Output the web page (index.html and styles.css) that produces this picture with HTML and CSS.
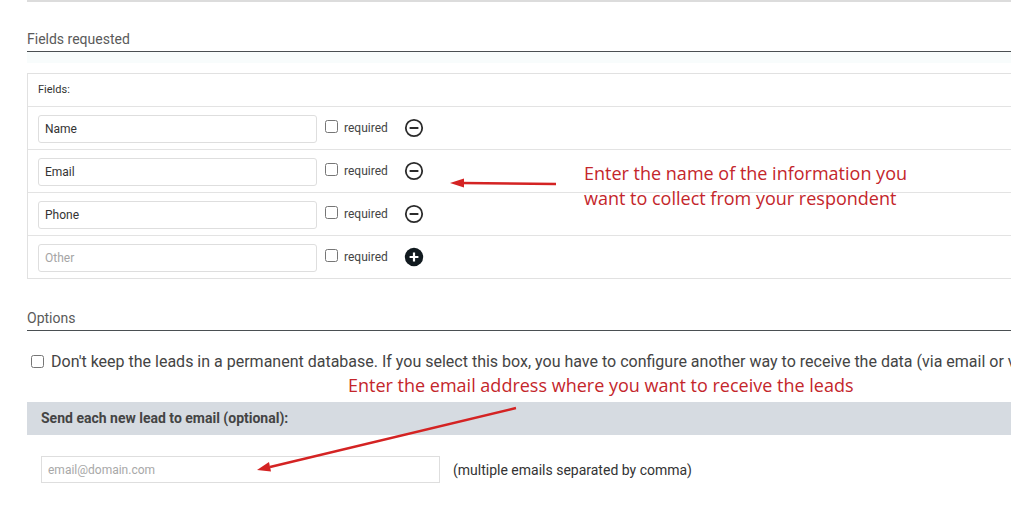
FILE: index.html
```html
<!DOCTYPE html>
<html lang="en">

<head>
  <meta charset="UTF-8" />
  <meta name="viewport" content="width=device-width, initial-scale=1.0" />
  <title>Form settings</title>
  <link rel="stylesheet" href="styles.css">
</head>

<body>
  <div class="page">
    <div class="top-rule"></div>

    <h2 class="section-title first">Fields requested</h2>
    <div class="title-shade"></div>

    <div class="fields-box">
      <div class="fields-head">Fields:</div>

      <div class="field-row">
        <input type="text" class="field-input" value="Name" />
        <label class="req"><input type="checkbox" /> required</label>
        <span class="icon-btn">
          <svg width="20" height="20" viewBox="0 0 20 20"><circle cx="10" cy="10" r="8.2" fill="none" stroke="#2b2b2b" stroke-width="1.8"/><path d="M5.6 10h8.8" stroke="#2b2b2b" stroke-width="2"/></svg>
        </span>
      </div>

      <div class="field-row">
        <input type="text" class="field-input" value="Email" />
        <label class="req"><input type="checkbox" /> required</label>
        <span class="icon-btn">
          <svg width="20" height="20" viewBox="0 0 20 20"><circle cx="10" cy="10" r="8.2" fill="none" stroke="#2b2b2b" stroke-width="1.8"/><path d="M5.6 10h8.8" stroke="#2b2b2b" stroke-width="2"/></svg>
        </span>
      </div>

      <div class="field-row">
        <input type="text" class="field-input" value="Phone" />
        <label class="req"><input type="checkbox" /> required</label>
        <span class="icon-btn">
          <svg width="20" height="20" viewBox="0 0 20 20"><circle cx="10" cy="10" r="8.2" fill="none" stroke="#2b2b2b" stroke-width="1.8"/><path d="M5.6 10h8.8" stroke="#2b2b2b" stroke-width="2"/></svg>
        </span>
      </div>

      <div class="field-row">
        <input type="text" class="field-input" placeholder="Other" />
        <label class="req"><input type="checkbox" /> required</label>
        <span class="icon-btn">
          <svg width="20" height="20" viewBox="0 0 20 20"><circle cx="10" cy="10" r="9.2" fill="#111a1f"/><path d="M10 5.6v8.8M5.6 10h8.8" stroke="#fff" stroke-width="2.2"/></svg>
        </span>
      </div>
    </div>

    <h2 class="section-title">Options</h2>

    <label class="option-line"><input type="checkbox" /> Don't keep the leads in a permanent database. If you select this box, you have to configure another way to receive the data (via email or via webhook).</label>

    <div class="send-bar">Send each new lead to email (optional):</div>

    <div class="email-row">
      <input type="text" class="email-input" placeholder="email@domain.com" />
      <span class="hint">(multiple emails separated by comma)</span>
    </div>
  </div>

  <!-- annotations drawn over the screenshot -->
  <div class="note note-fields">Enter the name of the information you<br>want to collect from your respondent</div>
  <div class="note note-email">Enter the email address where you want to receive the leads</div>

  <svg class="arrows" width="1011" height="520" viewBox="0 0 1011 520">
    <path d="M556 184 L462 183" stroke="#d42323" stroke-width="2.4" fill="none"/>
    <path d="M450 183 L464 178.5 L464 187.5 Z" fill="#d42323"/>
    <path d="M516 408 L270 467" stroke="#d42323" stroke-width="2.4" fill="none"/>
    <path d="M257 470 L269 462 L271 471.5 Z" fill="#d42323"/>
  </svg>
</body>

</html>
```

FILE: styles.css
```css
body {
  margin: 0;
  font-family: Roboto, "Liberation Sans", Arial, sans-serif;
  background: #fff;
  color: #444;
  overflow: hidden;
  width: 1011px;
  height: 520px;
  position: relative;
}

.page {
  width: 1100px;
  padding-left: 27px;
}

.top-rule {
  border-top: 2px solid #dcdcdc;
}

.section-title {
  margin: 0;
  margin-top: 31px;
  font-size: 14px;
  font-weight: normal;
  line-height: 16px;
  color: #5a5a5a;
  padding-bottom: 4px;
  border-bottom: 1px solid #4a4f52;
}

.section-title.first {
  margin-top: 29px;
}

.title-shade {
  height: 11px;
  background: #f8fcfc;
}

.fields-box {
  margin-top: 10px;
  border: 1px solid #e1e1e1;
  border-right: none;
}

.fields-head {
  height: 32px;
  line-height: 32px;
  padding-left: 10px;
  font-size: 11px;
  color: #333;
}

.field-row {
  height: 42px;
  border-top: 1px solid #e3e3e3;
  display: flex;
  align-items: center;
  padding-left: 10px;
}

.field-input {
  width: 279px;
  height: 28px;
  box-sizing: border-box;
  border: 1px solid #dedede;
  border-radius: 3px;
  padding: 0 6px;
  font-family: Roboto, "Liberation Sans", Arial, sans-serif;
  font-size: 12px;
  color: #333;
  margin-top: 1px;
}

.field-input::placeholder {
  color: #a5a5a5;
}

.req {
  display: flex;
  align-items: center;
  margin-left: 8px;
  font-size: 12px;
  color: #444;
}

.req input {
  width: 13px;
  height: 13px;
  margin: 0 6px 0 0;
  position: relative;
  top: -2px;
}

.icon-btn {
  display: flex;
  margin-left: 16px;
}

.option-line {
  display: flex;
  align-items: center;
  margin-top: 21px;
  margin-left: 4px;
  font-size: 16px;
  color: #444;
  white-space: nowrap;
}

.option-line input {
  width: 13px;
  height: 13px;
  margin: 0 7px 0 0;
}

.send-bar {
  margin-top: 31px;
  height: 33px;
  line-height: 33px;
  background: #d6dbe1;
  padding-left: 14px;
  font-size: 14px;
  font-weight: bold;
  color: #444;
}

.email-row {
  display: flex;
  align-items: center;
  margin-top: 21px;
  padding-left: 14px;
}

.email-input {
  width: 399px;
  height: 27px;
  box-sizing: border-box;
  border: 1px solid #dedede;
  padding: 0 6px;
  font-family: Roboto, "Liberation Sans", Arial, sans-serif;
  font-size: 12px;
}

.email-input::placeholder {
  color: #a8a8a8;
}

.hint {
  margin-left: 13px;
  font-size: 14px;
  color: #333;
}

.note {
  position: absolute;
  font-family: "Open Sans", "Liberation Sans", sans-serif;
  color: #c4262b;
  font-size: 18px;
  line-height: 25px;
  white-space: nowrap;
}

.note-fields {
  left: 584px;
  top: 161px;
}

.note-email {
  left: 348px;
  top: 373px;
}

.arrows {
  position: absolute;
  left: 0;
  top: 0;
}
```
